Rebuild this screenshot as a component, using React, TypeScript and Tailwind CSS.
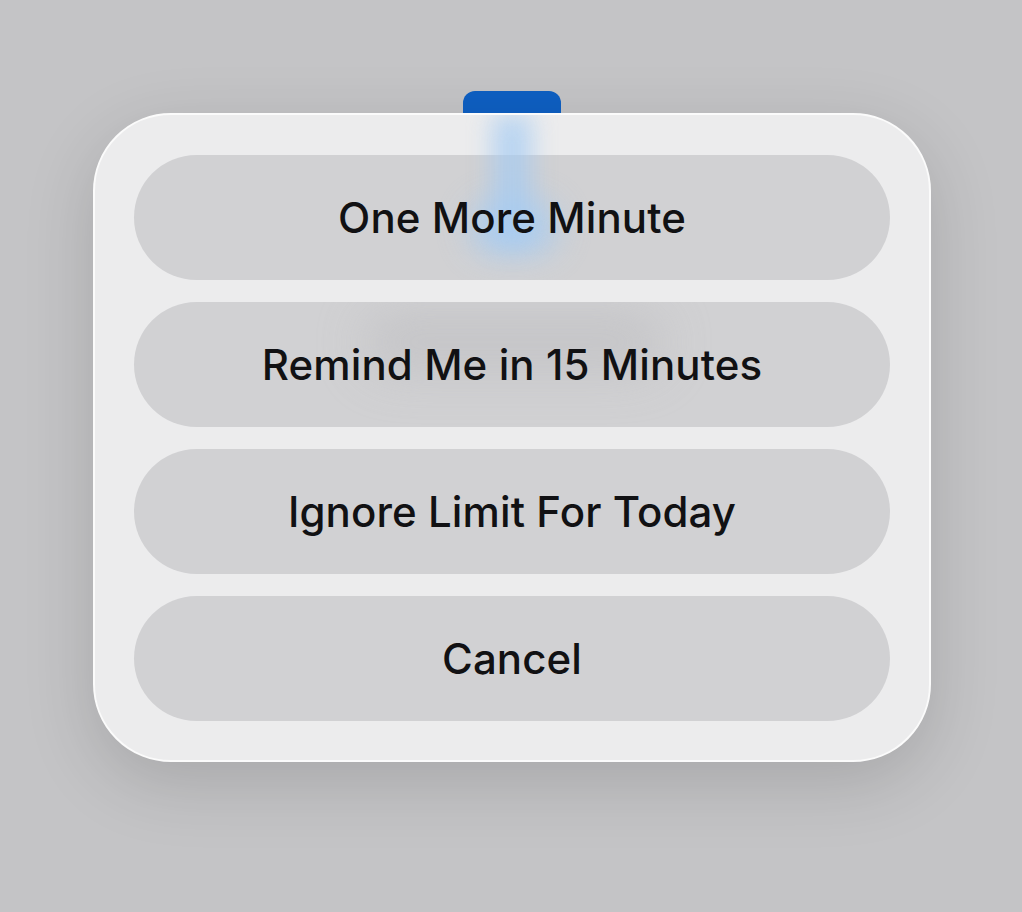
const options = [
  'One More Minute',
  'Remind Me in 15 Minutes',
  'Ignore Limit For Today',
  'Cancel',
];

export default function App() {
  return (
    <div
      className="w-[1022px] h-[912px] overflow-hidden bg-[#c4c4c6] pt-[91px]"
      style={{ fontFamily: 'Inter, "Noto Sans", sans-serif' }}
    >
      <div className="ml-[463px] w-[98px] h-[22px] rounded-t-[12px] bg-[#0e5fc2]" />
      <div className="relative ml-[93px] w-[838px] h-[649px] rounded-[78px] bg-[#ececed] border-2 border-[#fbfbfb] shadow-[0_20px_70px_rgba(0,0,0,0.15)] px-[39px] pt-[40px] pb-[39px] flex flex-col gap-[22px] overflow-hidden">
        {options.map((label, i) => (
          <button
            key={i}
            type="button"
            className="relative h-[125px] w-full rounded-full bg-[#d1d1d3] flex items-center justify-center overflow-hidden"
          >
            {i === 0 && (
              <div className="absolute left-[335px] top-[45px] w-[90px] h-[55px] rounded-full bg-[#a9cdf2] blur-lg opacity-75" />
            )}
            {i === 1 && (
              <div className="absolute left-[230px] top-[10px] w-[300px] h-[60px] rounded-full bg-[#bdbdc0] blur-xl opacity-60" />
            )}
            <span className="relative z-10 text-[42px] font-medium text-[#111113] tracking-[0.1px]">
              {label}
            </span>
          </button>
        ))}
        <div className="absolute left-[397px] top-0 w-[40px] h-[130px] bg-[#a4cbf3] blur-md opacity-70 pointer-events-none" />
      </div>
    </div>
  );
}
